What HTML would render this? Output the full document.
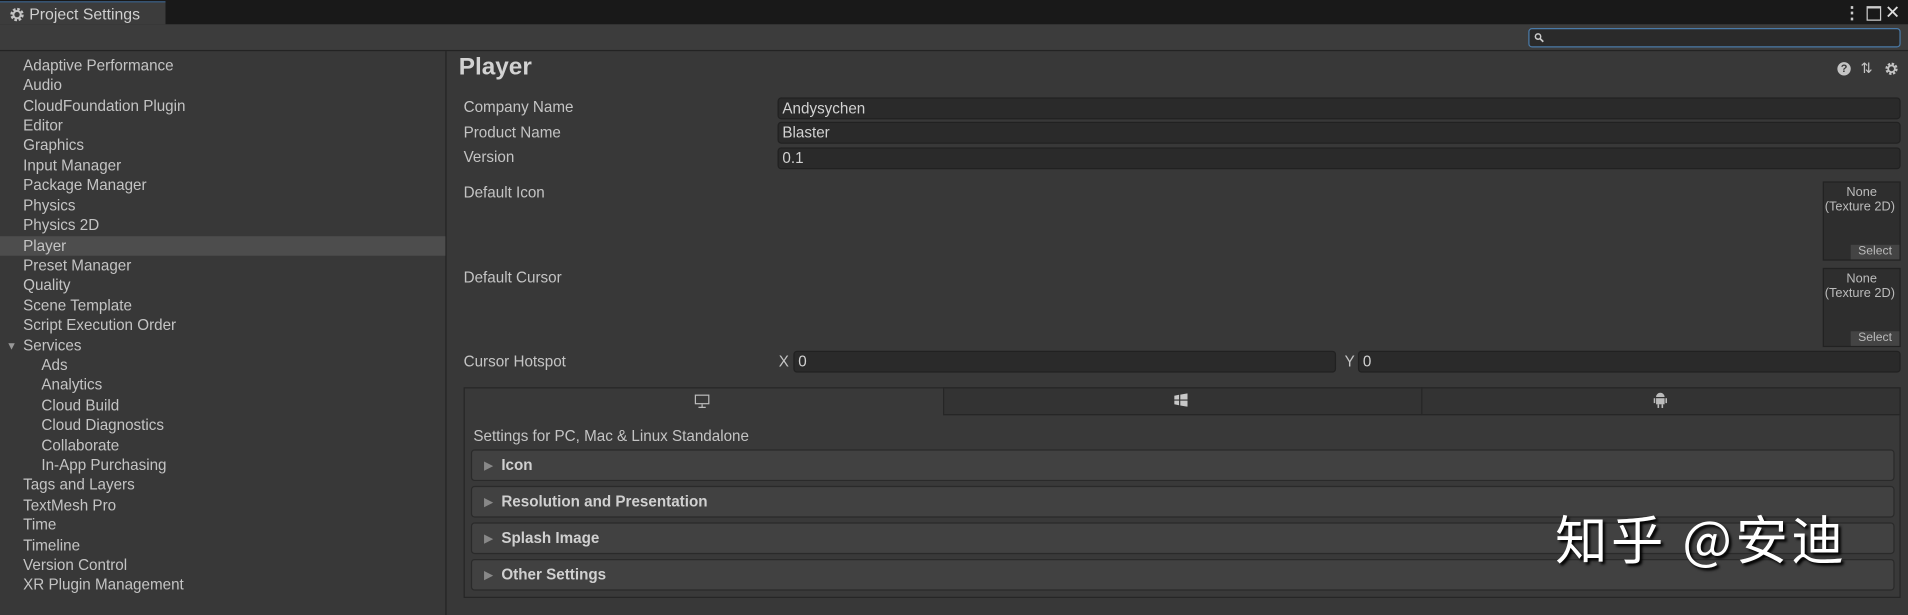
<!DOCTYPE html>
<html><head><meta charset="utf-8"><style>
html,body{margin:0;padding:0;width:1908px;height:615px;overflow:hidden;background:#383838}
#w{position:absolute;left:0;top:0;width:1568px;height:505px;transform:scale(1.2168,1.2178);transform-origin:0 0;font-family:"Liberation Sans",sans-serif;color:#c4c4c4;font-size:12.5px}
.a{position:absolute}
.side div{position:absolute;left:19px;height:16px;line-height:16px;white-space:nowrap}
.lbl{position:absolute;left:381px;line-height:16px}
.fld{position:absolute;background:#2a2a2a;border:1px solid #212121;border-radius:3px;box-sizing:border-box;line-height:16px;padding-left:3px;color:#d2d2d2}
.fo{position:absolute;left:387px;width:1170px;height:26px;background:#414141;border:1px solid #2a2a2a;border-radius:3px;box-sizing:border-box;font-weight:bold;line-height:24px;color:#d0d0d0}
.fo span{position:absolute;left:10px;font-size:9px;color:#888}
.fo b{position:absolute;left:24px}
.tex{position:absolute;left:1498px;width:64px;height:65px;background:#2e2e2e;border:1px solid #222;box-sizing:border-box;font-size:10.5px;text-align:center;line-height:12px;color:#bbb}
.tex .s{position:absolute;right:0;bottom:0;width:40px;height:12px;background:#444;font-size:10px;line-height:12px}
</style></head><body><div id="w">
<div class="a" style="left:0;top:0;width:1568px;height:20px;background:#191919"></div>
<div class="a" style="left:0;top:1px;width:136px;height:19px;background:#3c3c3c;border-top:1px solid #3a5f86;box-sizing:border-box"></div>
<svg class="a" style="left:8px;top:6px" width="12" height="12" viewBox="0 0 12 12"><circle cx="6" cy="6" r="4.2" fill="none" stroke="#c4c4c4" stroke-width="2.6" stroke-dasharray="2 1.3"/><circle cx="6" cy="6" r="3" fill="none" stroke="#c4c4c4" stroke-width="1.6"/></svg>
<div class="a" style="left:24px;top:4px;font-size:13px;color:#d0d0d0">Project Settings</div>
<div class="a" style="left:1515px;top:2px;font-size:14px;font-weight:bold;color:#ccc">⋮</div>
<div class="a" style="left:1534px;top:5px;width:10px;height:9px;border:1px solid #ccc;border-top-width:2px"></div>
<div class="a" style="left:1549px;top:1px;font-size:15px;color:#ddd">✕</div>
<div class="a" style="left:0;top:20px;width:1568px;height:21px;background:#3c3c3c;border-bottom:1px solid #232323"></div>
<div class="a" style="left:1256px;top:23px;width:306px;height:16px;background:#2a2a2a;border:1px solid #4a7aa8;border-radius:3px;box-sizing:border-box"></div>
<svg class="a" style="left:1261px;top:27px" width="8" height="8" viewBox="0 0 8 8"><circle cx="3" cy="3" r="2.2" fill="none" stroke="#ccc" stroke-width="1.2"/><path d="M4.5 4.5l2.8 2.8" stroke="#ccc" stroke-width="1.4"/></svg>
<div class="a" style="left:366px;top:42px;width:1px;height:463px;background:#232323"></div>
<div class="a" style="left:0;top:194px;width:366px;height:16px;background:#4d4d4d"></div>
<div class="side">
<div style="top:46px">Adaptive Performance</div><div style="top:62px">Audio</div><div style="top:79px">CloudFoundation Plugin</div><div style="top:95px">Editor</div><div style="top:111px">Graphics</div><div style="top:128px">Input Manager</div><div style="top:144px">Package Manager</div><div style="top:161px">Physics</div><div style="top:177px">Physics 2D</div><div style="top:194px">Player</div><div style="top:210px">Preset Manager</div><div style="top:226px">Quality</div><div style="top:243px">Scene Template</div><div style="top:259px">Script Execution Order</div><div style="top:276px">Services</div>
<div style="top:292px;left:34px">Ads</div><div style="top:308px;left:34px">Analytics</div><div style="top:325px;left:34px">Cloud Build</div><div style="top:341px;left:34px">Cloud Diagnostics</div><div style="top:358px;left:34px">Collaborate</div><div style="top:374px;left:34px">In-App Purchasing</div>
<div style="top:390px">Tags and Layers</div><div style="top:407px">TextMesh Pro</div><div style="top:423px">Time</div><div style="top:440px">Timeline</div><div style="top:456px">Version Control</div><div style="top:472px">XR Plugin Management</div>
<div style="top:276px;left:5px;font-size:9px;color:#999">▼</div>
</div>
<div class="a" style="left:377px;top:44px;font-size:20px;font-weight:bold;color:#d2d2d2">Player</div>
<div class="a" style="left:1510px;top:51px;width:11px;height:11px;border-radius:50%;background:#c4c4c4;color:#383838;font-size:9px;font-weight:bold;text-align:center;line-height:11px">?</div>
<div class="a" style="left:1529px;top:49px;font-size:12px;color:#c4c4c4">⇅</div>
<svg class="a" style="left:1549px;top:51px" width="11" height="11" viewBox="0 0 12 12"><circle cx="6" cy="6" r="4.2" fill="none" stroke="#c4c4c4" stroke-width="2.6" stroke-dasharray="2 1.3"/><circle cx="6" cy="6" r="3" fill="none" stroke="#c4c4c4" stroke-width="1.6"/></svg>
<div class="lbl" style="top:80px">Company Name</div>
<div class="lbl" style="top:101px">Product Name</div>
<div class="lbl" style="top:121px">Version</div>
<div class="fld" style="left:639px;top:80px;width:923px;height:18px">Andysychen</div>
<div class="fld" style="left:639px;top:100px;width:923px;height:18px">Blaster</div>
<div class="fld" style="left:639px;top:121px;width:923px;height:18px">0.1</div>
<div class="lbl" style="top:150px">Default Icon</div>
<div class="lbl" style="top:220px">Default Cursor</div>
<div class="tex" style="top:149px"><div style="margin-top:2px">None</div><div style="margin-left:-3px;white-space:nowrap">(Texture 2D)</div><div class="s">Select</div></div>
<div class="tex" style="top:220px"><div style="margin-top:2px">None</div><div style="margin-left:-3px;white-space:nowrap">(Texture 2D)</div><div class="s">Select</div></div>
<div class="lbl" style="top:289px">Cursor Hotspot</div>
<div class="a" style="left:640px;top:289px;line-height:16px">X</div>
<div class="fld" style="left:652px;top:288px;width:446px;height:18px">0</div>
<div class="a" style="left:1105px;top:289px;line-height:16px">Y</div>
<div class="fld" style="left:1116px;top:288px;width:446px;height:18px">0</div>
<div class="a" style="left:381px;top:318px;width:1181px;height:173px;border:1px solid #262626;box-sizing:border-box;background:#393939"></div>
<div class="a" style="left:775px;top:318px;width:787px;height:23px;background:#333;border:1px solid #262626;box-sizing:border-box"></div>
<div class="a" style="left:1168px;top:318px;width:1px;height:23px;background:#262626"></div>
<svg class="a" style="left:570px;top:323px" width="14" height="13" viewBox="0 0 14 13"><rect x="1.5" y="1.5" width="11" height="7" fill="none" stroke="#bbb"/><path d="M7 9v2M4 11.5h6" stroke="#bbb"/></svg>
<svg class="a" style="left:965px;top:323px" width="11" height="11" viewBox="0 0 11 11"><path d="M0 2l4-.8V5H0zM5 1l6-1v5H5zM0 6h4v3.8L0 9zM5 6h6v5l-6-1z" fill="#c8c8c8"/></svg>
<svg class="a" style="left:1359px;top:322px" width="11" height="13" viewBox="0 0 11 13"><path d="M2 4a3.5 3.5 0 0 1 7 0z" fill="#bbb"/><rect x="2" y="5" width="7" height="5" fill="#bbb"/><rect x="0" y="5" width="1.3" height="4" fill="#bbb"/><rect x="9.7" y="5" width="1.3" height="4" fill="#bbb"/><rect x="3.2" y="10" width="1.3" height="3" fill="#bbb"/><rect x="6.5" y="10" width="1.3" height="3" fill="#bbb"/></svg>
<div class="a" style="left:389px;top:350px;line-height:16px">Settings for PC, Mac &amp; Linux Standalone</div>
<div class="fo" style="top:369px"><span>▶</span><b>Icon</b></div>
<div class="fo" style="top:399px"><span>▶</span><b>Resolution and Presentation</b></div>
<div class="fo" style="top:429px"><span>▶</span><b>Splash Image</b></div>
<div class="fo" style="top:459px"><span>▶</span><b>Other Settings</b></div>
<div class="a" style="left:1278px;top:414px;font-family:'Noto Sans CJK SC',sans-serif;font-size:43px;letter-spacing:3px;color:#fff;white-space:nowrap;text-shadow:2px 2px 2px #000;line-height:54px">知乎 @安迪</div>
</div></body></html>
